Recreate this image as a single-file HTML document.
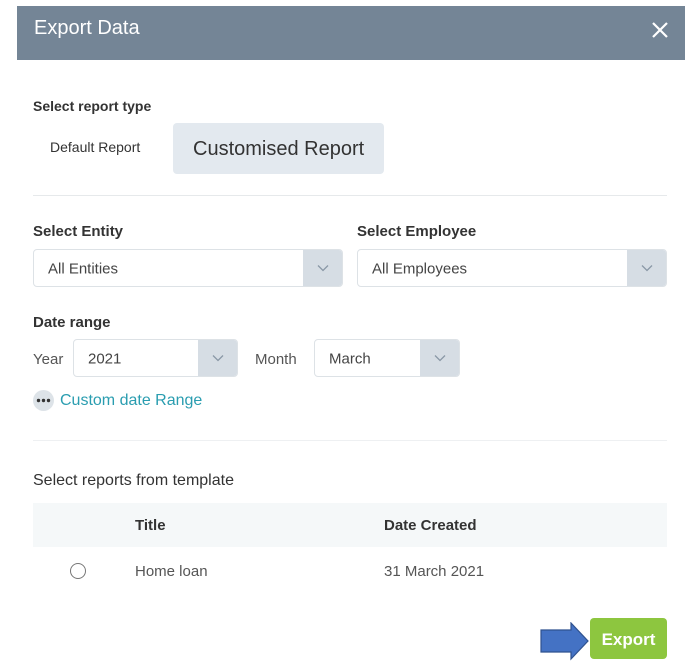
<!DOCTYPE html>
<html><head><style>
*{margin:0;padding:0;box-sizing:border-box}
body{width:685px;height:672px;background:#fff;position:relative;font-family:"Liberation Sans",sans-serif;color:#333;overflow:hidden}
.a{position:absolute;white-space:nowrap}
.b{font-weight:bold;font-size:15px;color:#333}
.sel{position:absolute;border:1px solid #dde2e6;border-radius:4px;background:#fff;overflow:hidden}
.sel .arr{position:absolute;right:0;top:0;bottom:0;background:#d6dde4}
.sel .arr svg{position:absolute;left:50%;top:50%;transform:translate(-50%,-50%)}
.sel span{position:absolute;left:14px;top:50%;transform:translateY(-45%);font-size:15px;color:#444}
</style></head><body>
<div class="a" style="left:17px;top:6px;width:668px;height:54px;background:#748596"></div>
<div class="a" style="left:34px;top:17px;font-size:20px;color:#fff">Export Data</div>
<svg class="a" style="left:651px;top:21px" width="18" height="18"><path d="M2 2L16 16M16 2L2 16" stroke="#fff" stroke-width="2.2"/></svg>
<div class="a b" style="left:33px;top:98px;font-size:14px">Select report type</div>
<div class="a" style="left:50px;top:139px;font-size:14px;color:#333">Default Report</div>
<div class="a" style="left:173px;top:123px;width:211px;height:51px;background:#e3e9ef;border-radius:4px"></div>
<div class="a" style="left:193px;top:138px;font-size:20px;color:#333">Customised Report</div>
<div class="a" style="left:33px;top:195px;width:634px;height:1px;background:#e6e9eb"></div>
<div class="a b" style="left:33px;top:223px">Select Entity</div>
<div class="a b" style="left:357px;top:223px">Select Employee</div>
<div class="sel" style="left:33px;top:249px;width:310px;height:38px"><span>All Entities</span><div class="arr" style="width:39px"><svg width="12" height="7"><path d="M1 1L6 6L11 1" stroke="#8a98a6" fill="none" stroke-width="1.3"/></svg></div></div>
<div class="sel" style="left:357px;top:249px;width:310px;height:38px"><span>All Employees</span><div class="arr" style="width:39px"><svg width="12" height="7"><path d="M1 1L6 6L11 1" stroke="#8a98a6" fill="none" stroke-width="1.3"/></svg></div></div>
<div class="a b" style="left:33px;top:314px">Date range</div>
<div class="a" style="left:33px;top:351px;font-size:15px;color:#555">Year</div>
<div class="sel" style="left:73px;top:339px;width:165px;height:38px"><span>2021</span><div class="arr" style="width:39px"><svg width="12" height="7"><path d="M1 1L6 6L11 1" stroke="#8a98a6" fill="none" stroke-width="1.3"/></svg></div></div>
<div class="a" style="left:255px;top:351px;font-size:15px;color:#555">Month</div>
<div class="sel" style="left:314px;top:339px;width:146px;height:38px"><span>March</span><div class="arr" style="width:39px"><svg width="12" height="7"><path d="M1 1L6 6L11 1" stroke="#8a98a6" fill="none" stroke-width="1.3"/></svg></div></div>
<div class="a" style="left:33px;top:390px;width:21px;height:21px;border-radius:50%;background:#dde3e8"></div>
<svg class="a" style="left:36px;top:398px" width="15" height="5"><circle cx="2.5" cy="2.5" r="1.7" fill="#333"/><circle cx="7.5" cy="2.5" r="1.7" fill="#333"/><circle cx="12.5" cy="2.5" r="1.7" fill="#333"/></svg>
<div class="a" style="left:60px;top:392px;font-size:16px;color:#2a9db0">Custom date Range</div>
<div class="a" style="left:33px;top:440px;width:634px;height:1px;background:#eef0f2"></div>
<div class="a" style="left:33px;top:472px;font-size:16px;color:#333">Select reports from template</div>
<div class="a" style="left:33px;top:503px;width:634px;height:44px;background:#f5f8f9"></div>
<div class="a b" style="left:135px;top:517px">Title</div>
<div class="a b" style="left:384px;top:517px">Date Created</div>
<div class="a" style="left:70px;top:563px;width:16px;height:16px;border:1px solid #777;border-radius:50%"></div>
<div class="a" style="left:135px;top:563px;font-size:15px;color:#555">Home loan</div>
<div class="a" style="left:384px;top:563px;font-size:15px;color:#555">31 March 2021</div>
<svg class="a" style="left:540px;top:622px" width="50" height="40"><path d="M1 8H31V1L48 19L31 37V30H1Z" fill="#4472c4" stroke="#2f528f" stroke-width="1.2"/></svg>
<div class="a" style="left:590px;top:618px;width:77px;height:41px;background:#8dc63f;border-radius:4px;color:#fff;font-weight:bold;font-size:17px;text-align:center;line-height:43px">Export</div>
</body></html>
